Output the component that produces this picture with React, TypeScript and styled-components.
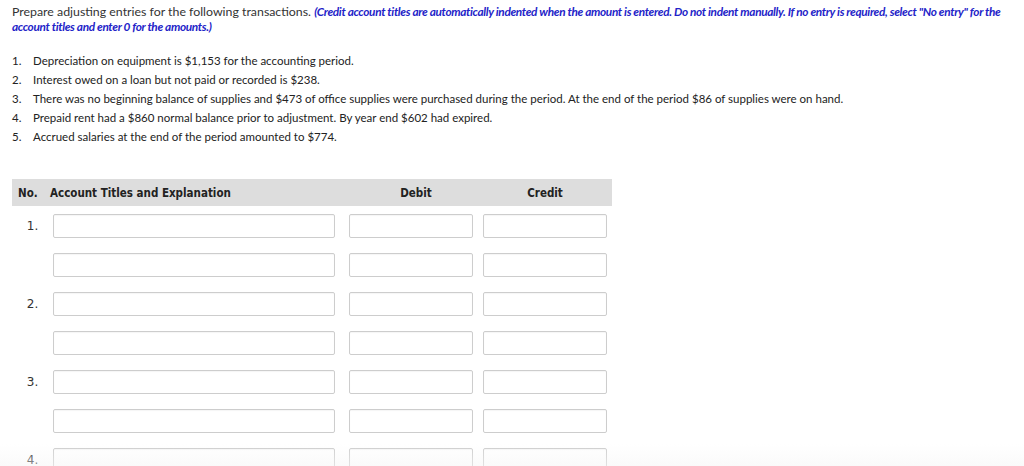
import React from "react";
import styled, { createGlobalStyle } from "styled-components";

const Global = createGlobalStyle`
  html, body { margin: 0; padding: 0; background: #fff; }
  body { font-family: Lato, "Open Sans", sans-serif; color: #222; }
`;

const Page = styled.div`
  width: 1024px;
  height: 466px;
  overflow: hidden;
  box-sizing: border-box;
  padding: 4px 12px 0 12px;
  position: relative;
`;

const Instructions = styled.p`
  margin: 0;
  font-size: 12.35px;
  line-height: 15px;
  color: #333;
  width: 1005px;
  white-space: nowrap;
`;

const Note = styled.span`
  color: #2323c8;
  font-style: italic;
  font-weight: 700;
  font-size: 11.8px;
  letter-spacing: -0.33px;
`;

const Items = styled.ol`
  list-style: none;
  margin: 17px 0 0 0;
  padding: 0;
`;

const Item = styled.li`
  display: flex;
  font-size: 11.5px;
  line-height: 19px;
  color: #222;
`;

const ItemNum = styled.span`
  width: 21px;
  flex: none;
`;

const Journal = styled.div`
  margin-top: 33px;
  width: 600px;
`;

const HeaderRow = styled.div`
  display: grid;
  grid-template-columns: 38px 299px 134px 124px 5px;
  height: 27px;
  align-items: center;
  background: #dddddd;
  font-family: Tahoma, "DejaVu Sans Condensed", "DejaVu Sans", sans-serif;
  font-weight: 700;
  font-size: 11.5px;
  color: #222;
`;

const HeadCell = styled.div<{ $align?: string; $pad?: number }>`
  text-align: ${(p) => p.$align || "left"};
  padding-left: ${(p) => p.$pad ?? 0}px;
`;

const EntryRow = styled.div`
  display: grid;
  grid-template-columns: 38px 299px 134px 124px;
  align-items: center;
  margin-top: 15px;
  &:first-of-type { margin-top: 8px; }
`;

const RowNo = styled.div`
  text-align: center;
  font-family: Tahoma, "DejaVu Sans", sans-serif;
  font-size: 12px;
  color: #333;
  padding: 0 0 0 3px;
`;

const Field = styled.input<{ $w: number; $ml?: number }>`
  box-sizing: border-box;
  width: ${(p) => p.$w}px;
  height: 24px;
  margin: 0 0 0 ${(p) => p.$ml ?? 0}px;
  border: 1px solid #cdcdcd;
  border-radius: 2px;
  background: #fff;
  box-shadow: inset 0 1px 1px rgba(0, 0, 0, 0.04);
  padding: 0 4px;
  outline: none;
`;

const Rows = styled.div``;

const Fade = styled.div`
  position: absolute;
  left: 0;
  right: 0;
  bottom: 0;
  height: 22px;
  background: linear-gradient(to bottom, rgba(255,255,255,0), rgba(245,245,245,0.5));
  pointer-events: none;
`;

const items = [
  "Depreciation on equipment is $1,153 for the accounting period.",
  "Interest owed on a loan but not paid or recorded is $238.",
  "There was no beginning balance of supplies and $473 of office supplies were purchased during the period. At the end of the period $86 of supplies were on hand.",
  "Prepaid rent had a $860 normal balance prior to adjustment. By year end $602 had expired.",
  "Accrued salaries at the end of the period amounted to $774.",
];

const rows = ["1.", "", "2.", "", "3.", "", "4."];

export default function App() {
  return (
    <Page>
      <Global />
      <Instructions>
        Prepare adjusting entries for the following transactions.{" "}
        <Note>
          (Credit account titles are automatically indented when the amount is entered. Do not indent manually. If no
          entry is required, select "No entry" for the
          <br />
          account titles and enter 0 for the amounts.)
        </Note>
      </Instructions>
      <Items>
        {items.map((t, i) => (
          <Item key={i}>
            <ItemNum>{i + 1}.</ItemNum>
            <span>{t}</span>
          </Item>
        ))}
      </Items>
      <Journal>
        <HeaderRow>
          <HeadCell $pad={6}>No.</HeadCell>
          <HeadCell>Account Titles and Explanation</HeadCell>
          <HeadCell $align="center">Debit</HeadCell>
          <HeadCell $align="center">Credit</HeadCell>
          <div />
        </HeaderRow>
        <Rows>
          {rows.map((n, i) => (
            <EntryRow key={i}>
              <RowNo>{n}</RowNo>
              <Field $w={282} $ml={3} />
              <Field $w={124} />
              <Field $w={124} />
            </EntryRow>
          ))}
        </Rows>
      </Journal>
      <Fade />
    </Page>
  );
}
